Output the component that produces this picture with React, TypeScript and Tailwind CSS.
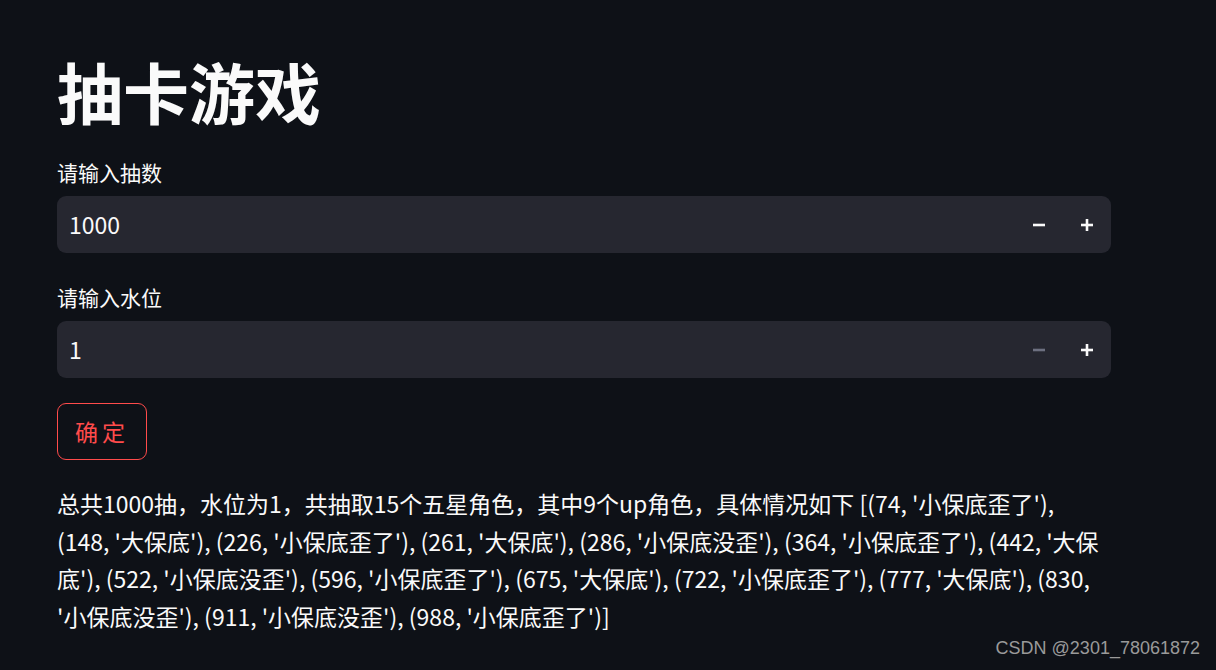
import * as React from "react";

const FONT = { fontFamily: '"Noto Sans CJK SC", "Noto Sans", sans-serif' };

function Minus({ disabled }: { disabled?: boolean }) {
  return (
    <svg width="14" height="14" viewBox="0 0 14 14" aria-hidden>
      <line
        x1="1"
        y1="7"
        x2="13"
        y2="7"
        stroke={disabled ? "#6d7080" : "#fafafa"}
        strokeWidth="2.6"
      />
    </svg>
  );
}

function Plus() {
  return (
    <svg width="14" height="14" viewBox="0 0 14 14" aria-hidden>
      <line x1="1" y1="7" x2="13" y2="7" stroke="#fafafa" strokeWidth="2.6" />
      <line x1="7" y1="1" x2="7" y2="13" stroke="#fafafa" strokeWidth="2.6" />
    </svg>
  );
}

function NumberInput({
  label,
  value,
  minDisabled,
  className,
}: {
  label: string;
  value: string;
  minDisabled?: boolean;
  className?: string;
}) {
  return (
    <div className={className}>
      <label className="block text-[21px] leading-[30px] text-[#fafafa]">
        {label}
      </label>
      <div className="mt-[9px] flex h-[57px] items-center rounded-[9px] bg-[#262730]">
        <span className="flex-1 pl-3 text-[23px] text-[#fafafa]">{value}</span>
        <button
          type="button"
          className="flex h-full w-12 items-center justify-center"
        >
          <Minus disabled={minDisabled} />
        </button>
        <button
          type="button"
          className="flex h-full w-12 items-center justify-center"
        >
          <Plus />
        </button>
      </div>
    </div>
  );
}

export default function App() {
  return (
    <div
      className="relative h-[670px] w-[1216px] overflow-hidden bg-[#0e1117] text-[#fafafa]"
      style={FONT}
    >
      <div className="ml-[57px] w-[1054px] pt-[50px]">
        <h1 className="text-[66px] font-bold leading-[80px]">抽卡游戏</h1>

        <NumberInput label="请输入抽数" value="1000" className="mt-[27px]" />
        <NumberInput
          label="请输入水位"
          value="1"
          minDisabled
          className="mt-[29px]"
        />

        <button
          type="button"
          className="mt-[25px] flex h-[57px] w-[90px] items-center justify-center rounded-[9px] border border-[#ff4b4b] text-[23px] tracking-[4px] text-[#ff4b4b]"
        >
          确定
        </button>

        <p className="mt-[25px] text-[23px] leading-[37.6px]">
          总共1000抽，水位为1，共抽取15个五星角色，其中9个up角色，具体情况如下 [(74, '小保底歪了'), (148, '大保底'), (226, '小保底歪了'), (261, '大保底'), (286, '小保底没歪'), (364, '小保底歪了'), (442, '大保底'), (522, '小保底没歪'), (596, '小保底歪了'), (675, '大保底'), (722, '小保底歪了'), (777, '大保底'), (830, '小保底没歪'), (911, '小保底没歪'), (988, '小保底歪了')]
        </p>
      </div>

      <div
        className="absolute bottom-[8px] right-[16px] text-[18px] text-[#9a9a9a]"
        style={{ fontFamily: '"Liberation Sans", Arial, sans-serif' }}
      >
        CSDN @2301_78061872
      </div>
    </div>
  );
}
